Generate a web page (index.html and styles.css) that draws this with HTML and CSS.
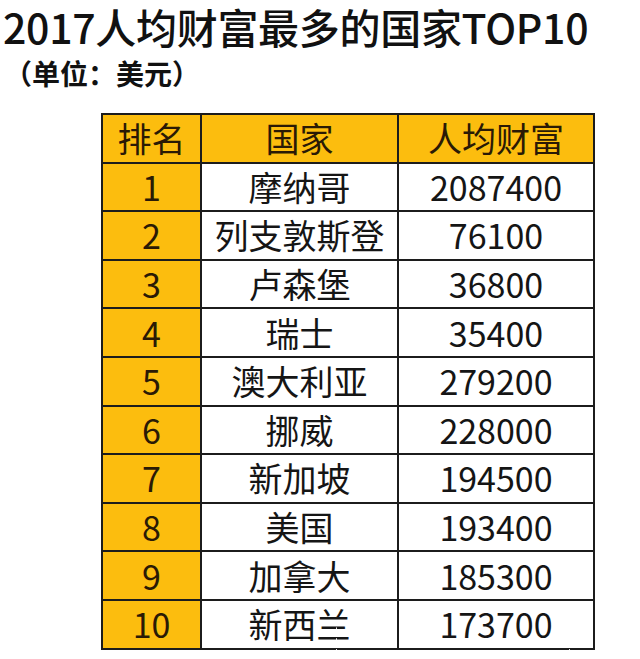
FILE: index.html
```html
<!DOCTYPE html>
<html lang="zh-CN">
<head>
<meta charset="utf-8">
<link rel="stylesheet" href="styles.css">
</head>
<body>
<div class="page">
  <h1 class="title">2017人均财富最多的国家TOP10</h1>
  <p class="unit">（单位：美元）</p>
  <table class="rank">
    <thead>
      <tr><th class="c-rank">排名</th><th class="c-name">国家</th><th class="c-val">人均财富</th></tr>
    </thead>
    <tbody>
      <tr><td class="c-rank">1</td><td>摩纳哥</td><td>2087400</td></tr>
      <tr><td class="c-rank">2</td><td>列支敦斯登</td><td>76100</td></tr>
      <tr><td class="c-rank">3</td><td>卢森堡</td><td>36800</td></tr>
      <tr><td class="c-rank">4</td><td>瑞士</td><td>35400</td></tr>
      <tr><td class="c-rank">5</td><td>澳大利亚</td><td>279200</td></tr>
      <tr><td class="c-rank">6</td><td>挪威</td><td>228000</td></tr>
      <tr><td class="c-rank">7</td><td>新加坡</td><td>194500</td></tr>
      <tr><td class="c-rank">8</td><td>美国</td><td>193400</td></tr>
      <tr><td class="c-rank">9</td><td>加拿大</td><td>185300</td></tr>
      <tr><td class="c-rank">10</td><td>新西兰</td><td>173700</td></tr>
    </tbody>
  </table>
  <div class="watermark"></div>
</div>
</body>
</html>
```
FILE: styles.css
```css
html, body {
  margin: 0;
  padding: 0;
  background: #ffffff;
}
.page {
  position: relative;
  width: 640px;
  height: 659px;
  overflow: hidden;
  font-family: "Noto Sans CJK SC", "Noto Sans", sans-serif;
  color: #111;
}
.title {
  margin: 0;
  padding: 0 0 0 3px;
  font-size: 41px;
  font-weight: 500;
  line-height: 52px;
  letter-spacing: -0.3px;
  white-space: nowrap;
  color: #111;
}
.unit {
  margin: 2px 0 0 4px;
  font-size: 28px;
  font-weight: 700;
  line-height: 38px;
  color: #111;
}
.rank {
  margin: 21px 0 0 101px;
  border-collapse: collapse;
  border: 2px solid #1c1c1c;
  width: 490px;
  table-layout: fixed;
}
.rank th,
.rank td {
  border: 2px solid #1c1c1c;
  height: 46.6px;
  padding: 0;
  text-align: center;
  vertical-align: middle;
  font-size: 34px;
  font-weight: 400;
  line-height: 44px;
  color: #151515;
}
.rank th {
  background: #fcbd0e;
  color: #2a1a05;
}
.rank td.c-rank {
  background: #fcbd0e;
  color: #2a1a05;
}
.rank .c-rank { width: 97px; }
.rank .c-name { width: 195px; }
.rank .c-val { width: 194px; }
.watermark {
  position: absolute;
  left: 336px;
  top: 622px;
  width: 232px;
  height: 28px;
  border-left: 1px dashed rgba(255,255,255,0.9);
  border-right: 1px dashed rgba(255,255,255,0.9);
  border-bottom: 2px dashed rgba(255,255,255,0.95);
}
```
